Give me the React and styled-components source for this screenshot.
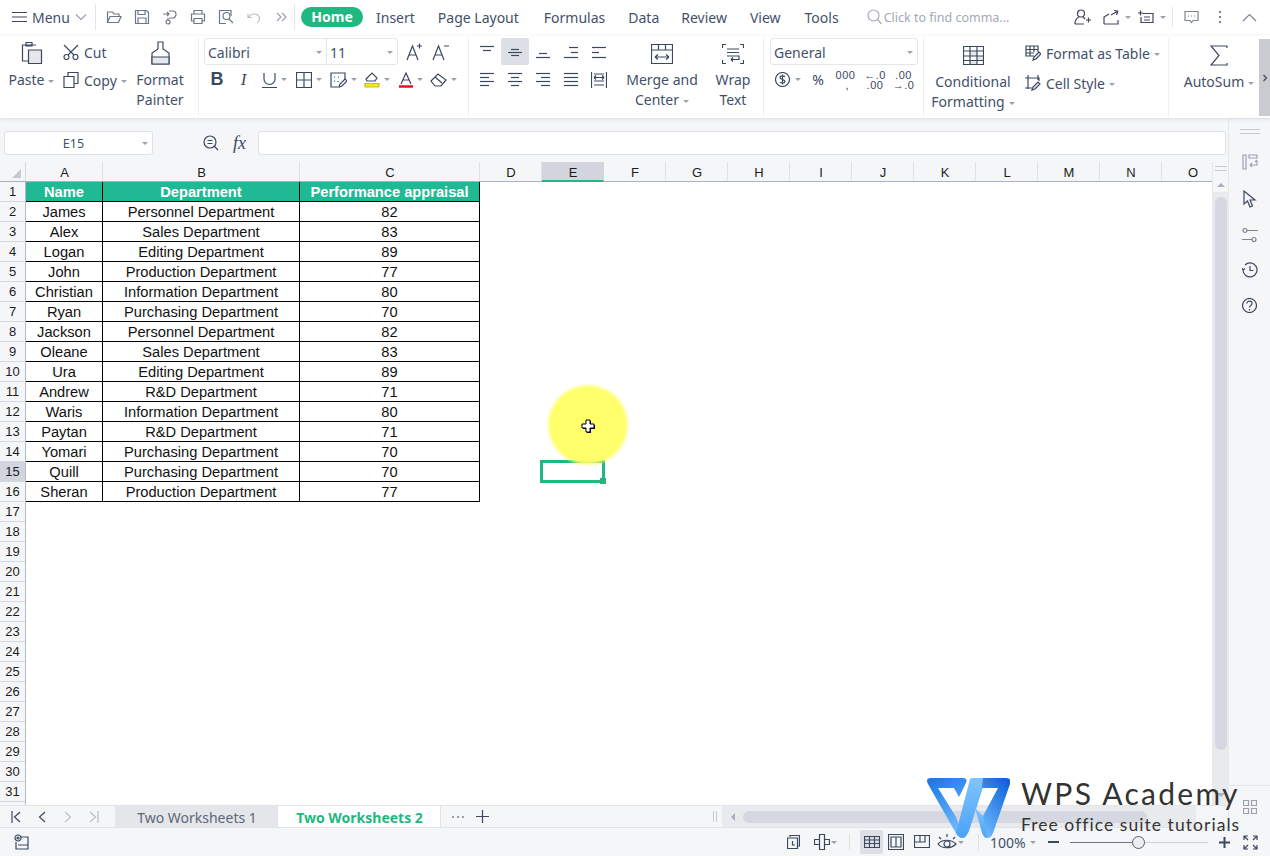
import React from "react";
import styled, { createGlobalStyle } from "styled-components";

const GlobalStyle = createGlobalStyle`
  html, body { margin: 0; padding: 0; background: #f5f6f8; }
  * { box-sizing: border-box; }
`;

const INK = "#3c4860";
const SOFT = "#6d7788";
const GREEN = "#1fb880";

const Page = styled.div`
  position: relative;
  width: 1270px;
  height: 856px;
  overflow: hidden;
  display: flex;
  flex-direction: column;
  background: #f5f6f8;
  color: #44506a;
  font-family: "Noto Sans", "Open Sans", sans-serif;
  font-size: 14px;
`;

const Svg = styled.svg`
  display: block;
  flex: none;
  fill: none;
  stroke: ${(p) => p.$color || INK};
  stroke-width: 1.2;
`;

const Icon = ({ w = 16, h = 16, color, children }) => (
  <Svg width={w} height={h} viewBox={`0 0 ${w} ${h}`} $color={color}>
    {children}
  </Svg>
);

const Caret = styled.span`
  display: inline-block;
  flex: none;
  width: 0;
  height: 0;
  margin-left: ${(p) => p.$gap ?? 4}px;
  vertical-align: middle;
  border-left: 3px solid transparent;
  border-right: 3px solid transparent;
  border-top: 3px solid #9aa1b0;
`;

const Space = styled.span`
  display: block;
  flex: none;
  width: ${(p) => p.$w}px;
`;

/* top bar */
const TopBar = styled.div`
  height: 36px;
  padding-bottom: 2px;
  display: flex;
  align-items: center;
  background: #fff;
  flex: none;
`;
const MenuBtn = styled.div`
  width: 96px;
  height: 26px;
  flex: none;
  padding-left: 12px;
  display: flex;
  align-items: center;
  gap: 5px;
  border-right: 1px solid #e3e5ea;
`;
const QuickTools = styled.div`
  width: 199px;
  height: 26px;
  flex: none;
  padding-left: 10px;
  display: flex;
  align-items: center;
  gap: 12px;
  border-right: 1px solid #e3e5ea;
`;
const Tabs = styled.div`
  display: flex;
  flex: none;
  align-items: center;
  margin-left: 6px;
`;
const Tab = styled.div`
  margin-left: ${(p) => p.$gap}px;
  white-space: nowrap;
`;
const HomeTab = styled.div`
  width: 62px;
  height: 20px;
  border-radius: 10px;
  background: ${GREEN};
  color: #fff;
  font-weight: 700;
  text-align: center;
  line-height: 20px;
`;
const Search = styled.div`
  margin-left: 28px;
  width: 206px;
  flex: none;
  display: flex;
  align-items: center;
  gap: 2px;
  color: #a3a9b6;
  font-size: 12.5px;
`;
const TopRight = styled.div`
  display: flex;
  flex: none;
  align-items: center;
`;
const TopSep = styled.div`
  width: 1px;
  height: 20px;
  background: #e3e5ea;
  margin: 0 11px 0 6px;
`;

/* ribbon */
const Ribbon = styled.div`
  height: 82px;
  display: flex;
  background: #fff;
  flex: none;
  position: relative;
  z-index: 2;
  box-shadow: 0 1px 4px rgba(60, 70, 90, 0.14);
`;
const Group = styled.div`
  width: ${(p) => p.$w}px;
  height: 78px;
  flex: none;
  margin-top: 2px;
  padding-left: ${(p) => p.$pad || 0}px;
  display: flex;
  border-right: ${(p) => (p.$noline ? "none" : "1px solid #eceef1")};
  gap: ${(p) => p.$gap || 0}px;
`;
const Big = styled.div`
  width: ${(p) => p.$w}px;
  flex: none;
  display: flex;
  flex-direction: column;
  align-items: center;
  padding-top: ${(p) => p.$top || 0}px;
  line-height: 20px;
  white-space: nowrap;
`;
const BigIcon = styled.div`
  height: ${(p) => p.$h || 32}px;
  display: flex;
  align-items: flex-start;
  justify-content: center;
  padding-top: ${(p) => p.$pt ?? 4}px;
`;
const Stack = styled.div`
  display: flex;
  flex-direction: column;
  width: ${(p) => p.$w}px;
  flex: none;
  gap: ${(p) => p.$gap || 0}px;
  margin-top: ${(p) => p.$mt || 0}px;
  margin-right: ${(p) => p.$mr || 0}px;
`;
const SmallBtn = styled.div`
  height: 28px;
  display: flex;
  align-items: center;
  gap: 5px;
  white-space: nowrap;
`;
const FontBox = styled.div`
  width: ${(p) => p.$w}px;
  height: 27px;
  display: flex;
  background: #fff;
  border: 1px solid #e4e6ea;
  border-radius: 3px;
`;
const FontCell = styled.div`
  width: ${(p) => p.$w}px;
  padding: 2px 4px 0 ${(p) => p.$pad}px;
  display: flex;
  align-items: center;
  justify-content: space-between;
  border-right: ${(p) => (p.$line ? "1px solid #e4e6ea" : "none")};
`;
const Row = styled.div`
  display: flex;
  align-items: center;
  height: 27px;
  margin-top: ${(p) => p.$mt || 0}px;
`;
const Cell = styled.div`
  width: ${(p) => p.$w}px;
  height: 27px;
  flex: none;
  margin-left: ${(p) => p.$ml || 0}px;
  display: flex;
  align-items: center;
  justify-content: center;
  background: ${(p) => (p.$on ? "#dcdfe5" : "transparent")};
  border-radius: 2px;
`;
const Bold = styled.span`
  font: 700 18px "Liberation Sans", sans-serif;
  color: ${INK};
`;
const Ital = styled.span`
  font: italic 400 ${(p) => p.$size || 17}px "Liberation Serif", serif;
  color: ${INK};
`;
const Percent = styled.span`
  color: ${INK};
  font-size: 14px;
`;
const Mini = styled.span`
  font: 400 11px/10px "Liberation Sans", sans-serif;
  letter-spacing: 0.5px;
  color: ${INK};
  text-align: center;
  white-space: pre;
`;
const RibbonNext = styled.div`
  width: 11px;
  height: 77px;
  flex: none;
  margin-top: 3px;
  background: #c9cbd0;
  display: flex;
  align-items: center;
  justify-content: center;
`;

/* middle */
const Middle = styled.div`
  flex: 1;
  min-height: 0;
  display: flex;
`;
const WorkArea = styled.div`
  width: 1228px;
  flex: none;
  display: flex;
  flex-direction: column;
`;
const FormulaBar = styled.div`
  height: 44px;
  flex: none;
  padding: 13px 2px 0 4px;
  display: flex;
  align-items: flex-start;
`;
const NameBox = styled.div`
  width: 149px;
  height: 24px;
  background: #fff;
  border: 1px solid #e0e2e7;
  border-radius: 3px;
  display: flex;
  align-items: center;
  padding: 0 4px 0 0;
  font-size: 12.5px;
`;
const NameText = styled.span`
  flex: 1;
  text-align: center;
`;
const FxBtns = styled.div`
  width: 105px;
  height: 24px;
  padding-left: 50px;
  display: flex;
  align-items: center;
  gap: 14px;
`;
const FormulaInput = styled.div`
  flex: 1;
  height: 24px;
  background: #fff;
  border: 1px solid #e0e2e7;
  border-radius: 3px;
`;
const SheetRow = styled.div`
  height: 643px;
  flex: none;
  display: flex;
`;
const Sheet = styled.div`
  width: 1212px;
  flex: none;
  display: flex;
  flex-direction: column;
  overflow: hidden;
  font-family: "Liberation Sans", Arial, sans-serif;
`;
const ColHeader = styled.div`
  height: 20px;
  flex: none;
  display: flex;
  border-bottom: 1px solid #aab1c4;
`;
const Corner = styled.div`
  width: 26px;
  flex: none;
  position: relative;
  border-right: 1px solid #d5d8e0;
  &::after {
    content: "";
    position: absolute;
    right: 4px;
    bottom: 3px;
    border-left: 9px solid transparent;
    border-bottom: 9px solid #c6c9d0;
  }
`;
const ColCell = styled.div`
  width: ${(p) => p.$w}px;
  flex: none;
  margin-bottom: ${(p) => (p.$on ? "-1px" : "0")};
  padding-left: 1px;
  background: ${(p) => (p.$on ? "#d2d5dd" : "transparent")};
  border-right: 1px solid ${(p) => (p.$on ? "transparent" : "#dfe1e7")};
  border-bottom: ${(p) => (p.$on ? `2px solid ${GREEN}` : "none")};
  color: #1c1c1c;
  text-align: center;
  font-size: 13px;
  line-height: 21px;
`;
const SheetBody = styled.div`
  position: relative;
  flex: 1;
  display: flex;
  background: #fff;
`;
const RowHeads = styled.div`
  width: 26px;
  flex: none;
  background: #f5f6f8;
  border-right: 1px solid #b4bacb;
`;
const RowHead = styled.div`
  height: 20px;
  line-height: 20px;
  text-align: center;
  font-size: 13px;
  color: #1c1c1c;
  border-bottom: 1px solid #d5d8e0;
  background: ${(p) => (p.$on ? "#d2d5dd" : "transparent")};
`;
const Table = styled.div`
  display: grid;
  grid-template-columns: 77px 197px 180px;
  grid-auto-rows: 20px;
  align-self: flex-start;
`;
const Td = styled.div`
  border-right: 1px solid #000;
  border-bottom: 1px solid #000;
  text-align: center;
  color: #111;
  font-size: 14.67px;
  line-height: 20px;
  white-space: nowrap;
`;
const Th = styled(Td)`
  background: #1fba94;
  color: #fff;
  font-weight: 700;
`;
const Selection = styled.div`
  position: absolute;
  left: 540px;
  top: 278px;
  width: 65px;
  height: 23px;
  border: 3px solid ${GREEN};
  &::after {
    content: "";
    position: absolute;
    right: -4px;
    bottom: -4px;
    width: 6px;
    height: 6px;
    background: ${GREEN};
  }
`;
const VScroll = styled.div`
  width: 16px;
  flex: none;
  display: flex;
  flex-direction: column;
  align-items: center;
  background: linear-gradient(#f5f6f8 0 30px, #e8eaee 30px);
  border-left: 1px solid #e6e8ec;
`;
const GripLines = styled.div`
  width: ${(p) => p.$w}px;
  height: 5px;
  margin-top: ${(p) => p.$mt}px;
  flex: none;
  border-top: 1px solid #c5c9d2;
  border-bottom: 1px solid #c5c9d2;
`;
const ArrowUp = styled.div`
  margin-top: 12px;
  flex: none;
  border-left: 4px solid transparent;
  border-right: 4px solid transparent;
  border-bottom: 4px solid #a9b0c2;
`;
const ArrowDown = styled.div`
  margin-top: 43px;
  flex: none;
  border-left: 4px solid transparent;
  border-right: 4px solid transparent;
  border-top: 4px solid #a9b0c2;
`;
const VThumb = styled.div`
  width: 12px;
  height: 553px;
  margin-top: 10px;
  flex: none;
  border-radius: 6px;
  background: #d5d8e0;
`;

/* sheet tabs */
const TabBar = styled.div`
  height: 23px;
  flex: none;
  display: flex;
  align-items: stretch;
  border-top: 1px solid #e2e4e9;
  border-bottom: 1px solid #e2e4e9;
`;
const NavBtns = styled.div`
  width: 115px;
  flex: none;
  padding-left: 11px;
  display: flex;
  align-items: center;
  gap: 16px;
`;
const SheetTab = styled.div`
  width: ${(p) => p.$w}px;
  flex: none;
  padding-left: 1px;
  text-align: center;
  line-height: 23px;
  white-space: nowrap;
  background: ${(p) => (p.$on ? "#fff" : "#e4e6ea")};
  color: ${(p) => (p.$on ? GREEN : "#5d6678")};
  font-weight: ${(p) => (p.$on ? 700 : 400)};
  border-right: ${(p) => (p.$on ? "1px solid #e2e4e9" : "none")};
`;
const TabAdd = styled.div`
  width: 270px;
  flex: none;
  padding-left: 10px;
  display: flex;
  align-items: center;
  gap: 11px;
`;
const HScroll = styled.div`
  flex: 1;
  display: flex;
  align-items: center;
  min-width: 0;
`;
const HTrack = styled.div`
  margin-left: 5px;
  width: 474px;
  flex: none;
  height: 21px;
  background: #e8eaee;
  display: flex;
  align-items: center;
  padding-left: 9px;
`;
const HThumb = styled.div`
  width: 404px;
  height: 12px;
  margin-left: 8px;
  border-radius: 6px;
  background: #d5d8e0;
`;
const HGrip = styled.div`
  margin-left: 2px;
  width: 4px;
  height: 11px;
  flex: none;
  border-left: 1px solid #c5c9d2;
  border-right: 1px solid #c5c9d2;
`;
const ArrowLeft = styled.div`
  flex: none;
  border-top: 4px solid transparent;
  border-bottom: 4px solid transparent;
  border-right: 4px solid #a9b0c2;
`;

/* side panel */
const SidePanel = styled.div`
  flex: 1;
  display: flex;
  flex-direction: column;
  align-items: center;
  border-left: 1px solid #e6e8ec;
  border-top: 1px solid #eceef1;
`;
const SideIcons = styled.div`
  display: flex;
  flex-direction: column;
  align-items: center;
  gap: 20px;
  margin-top: 20px;
`;
const SideBottom = styled.div`
  margin-top: auto;
  width: 100%;
  height: 43px;
  border-top: 1px solid #e6e8ec;
  display: flex;
  align-items: center;
  justify-content: center;
`;

/* status bar */
const StatusBar = styled.div`
  height: 28px;
  flex: none;
  display: flex;
  align-items: center;
  padding-left: 13px;
`;
const StatusGroup = styled.div`
  margin-left: ${(p) => p.$ml}px;
  display: flex;
  flex: none;
  align-items: center;
`;
const StatusSep = styled.div`
  width: 1px;
  height: 16px;
  flex: none;
  background: #dfe1e6;
  margin: 0 ${(p) => p.$r}px 0 ${(p) => p.$l}px;
`;
const ViewBtn = styled.div`
  width: ${(p) => p.$w}px;
  height: 24px;
  flex: none;
  display: flex;
  align-items: center;
  justify-content: center;
  background: ${(p) => (p.$on ? "#dcdfe5" : "transparent")};
  border-radius: 2px;
`;
const Slider = styled.div`
  position: relative;
  width: 138px;
  height: 1px;
  flex: none;
  margin: 0 11px;
  background: linear-gradient(90deg, #6a7385 0 50%, #cfd2d9 50%);
`;
const Knob = styled.div`
  position: absolute;
  left: 62px;
  top: -6px;
  width: 13px;
  height: 13px;
  border-radius: 50%;
  background: #eceef1;
  border: 1px solid #555e70;
`;

/* overlays */
const Spot = styled.div`
  position: absolute;
  left: 546px;
  top: 383px;
  width: 84px;
  height: 84px;
  border-radius: 50%;
  background: radial-gradient(circle, rgba(255, 255, 102, 0.97) 0 37px, rgba(255, 255, 102, 0.8) 38px, rgba(255, 255, 140, 0) 42px);
  z-index: 3;
`;
const Pointer = styled.svg`
  position: absolute;
  left: 581px;
  top: 419px;
  z-index: 4;
`;
const Watermark = styled.div`
  position: absolute;
  left: 927px;
  top: 778px;
  display: flex;
  gap: 11px;
  z-index: 5;
`;
const MarkText = styled.div`
  display: flex;
  flex-direction: column;
`;
const MarkTitle = styled.div`
  font: 400 30px/30px Lato, sans-serif;
  letter-spacing: 2.3px;
  color: #333;
  white-space: nowrap;
`;
const MarkSub = styled.div`
  margin-top: 5px;
  font: 400 17.5px/24px Lato, sans-serif;
  letter-spacing: 1.05px;
  color: #333;
  white-space: nowrap;
`;

const people = [
  ["James", "Personnel Department", 82],
  ["Alex", "Sales Department", 83],
  ["Logan", "Editing Department", 89],
  ["John", "Production Department", 77],
  ["Christian", "Information Department", 80],
  ["Ryan", "Purchasing Department", 70],
  ["Jackson", "Personnel Department", 82],
  ["Oleane", "Sales Department", 83],
  ["Ura", "Editing Department", 89],
  ["Andrew", "R&D Department", 71],
  ["Waris", "Information Department", 80],
  ["Paytan", "R&D Department", 71],
  ["Yomari", "Purchasing Department", 70],
  ["Quill", "Purchasing Department", 70],
  ["Sheran", "Production Department", 77],
];

const columns = [
  ["A", 77], ["B", 197], ["C", 180], ["D", 62], ["E", 62], ["F", 62], ["G", 62], ["H", 62],
  ["I", 62], ["J", 62], ["K", 62], ["L", 62], ["M", 62], ["N", 62], ["O", 62],
];

const Lines = ({ rows, w = 16 }) => (
  <Icon w={w} h={16}>
    {rows.map(([x1, x2, y]) => (
      <path key={`${x1}${y}`} d={`M${x1} ${y}.5H${x2}`} />
    ))}
  </Icon>
);

function App() {
  return (
    <Page>
      <GlobalStyle />
      <TopBar>
        <MenuBtn>
          <Icon w={15} h={12}><path d="M0 1.500h15M0 6h15M0 10.500h15" /></Icon>
          Menu
          <Icon w={12} h={8} color="#9aa1b0"><path d="M1 1.500l5 5 5-5" /></Icon>
        </MenuBtn>
        <QuickTools>
          <Icon color={SOFT}><path d="M1.500 13.500V3h5l1.500 2h5v2.500M1.500 13.500h11l2.500-6H4z" /></Icon>
          <Icon color={SOFT}><path d="M1.500 1.500h11l2 2v11h-13zM4 1.500v4h7v-4M4 14.500V9h8v5.500" /></Icon>
          <Icon color={SOFT}><path d="M1 5h6M5 3l2 2-2 2M7 2h3.500a3.500 3.500 0 010 7H7M6 9v3" /><circle cx="6" cy="13" r="2" /></Icon>
          <Icon color={SOFT}><path d="M4 5V1.500h8V5M4 12H1.500V5h13v7H12M4 9.500h8v5H4z" /></Icon>
          <Icon color={SOFT}><path d="M13 7V1.500H1.500v13H8" /><circle cx="8.500" cy="7" r="3.500" /><path d="M11 10l4 4" /></Icon>
          <Icon color="#b9bec9"><path d="M2 4.500v4h4M2.500 8.500C5 4 12 3.500 13.500 9a5 5 0 01-2.500 5" /></Icon>
          <Icon color="#9aa1b0"><path d="M3 4l4 4-4 4M8 4l4 4-4 4" /></Icon>
        </QuickTools>
        <Tabs>
          <HomeTab>Home</HomeTab>
          <Tab $gap={13}>Insert</Tab>
          <Tab $gap={23}>Page Layout</Tab>
          <Tab $gap={25}>Formulas</Tab>
          <Tab $gap={23}>Data</Tab>
          <Tab $gap={22}>Review</Tab>
          <Tab $gap={23}>View</Tab>
          <Tab $gap={24}>Tools</Tab>
        </Tabs>
        <Search>
          <Icon w={15} h={16} color="#a3a9b6"><circle cx="6.500" cy="6.500" r="5.500" /><path d="M10.500 10.500l4 4.500" /></Icon>
          Click to find comma...
        </Search>
        <TopRight>
          <Icon w={18} h={16}><circle cx="8" cy="4.500" r="3.500" /><path d="M2 15c0-4 2-6 4-7M10 8l2 2M2 15h9M13 11h5M15.500 8.500v5" /></Icon>
          <Space $w={12} />
          <Icon w={17} h={16}><path d="M1 15V8l5-3M1 15h14v-4M8 6l7-4M15 2l-4-.500M15 2l-1.500 4" /></Icon>
          <Caret $gap={5} />
          <Space $w={7} />
          <Icon w={16} h={16}><path d="M0 4h5M2.500 1.500v5M5 4.500h10v9H3V8M6 8h6M6 11h6" /></Icon>
          <Caret $gap={6} />
          <TopSep />
          <Icon w={15} h={14} color="#7c8596"><path d="M1 1.500h13v9H9l-1.500 2-1.500-2H1zM4 6h1M7 6h1M10 6h1" /></Icon>
          <Space $w={19} />
          <Icon w={4} h={14} color="#7c8596"><path d="M2 1v2M2 6v2M2 11v2" strokeWidth="2" /></Icon>
          <Space $w={20} />
          <Icon w={15} h={9} color="#7c8596"><path d="M1 8l6.500-6.500L14 8" /></Icon>
        </TopRight>
      </TopBar>

      <Ribbon>
        <Group $w={199}>
          <Big $w={63}>
            <BigIcon $h={32} $pt={3}>
              <Icon w={22} h={24}>
                <path d="M15 4H1.500v16H7M5 1.500h6V5H5z" />
                <path d="M7.500 9h13v13.500h-13z" fill="#e5e7ec" />
              </Icon>
            </BigIcon>
            <span>Paste<Caret /></span>
          </Big>
          <Stack $w={72}>
            <SmallBtn>
              <Icon><path d="M1 1l10 10M15 1L5 11" /><circle cx="3.500" cy="13" r="2.500" /><circle cx="12.500" cy="13" r="2.500" /></Icon>
              Cut
            </SmallBtn>
            <SmallBtn>
              <Icon><path d="M5 4V.500h10v11h-4M1 4.500h10v11H1z" /></Icon>
              <span>Copy<Caret /></span>
            </SmallBtn>
          </Stack>
          <Big $w={50}>
            <BigIcon $h={32} $pt={3}>
              <Icon w={19} h={24}>
                <path d="M7 1h5v7l6 4v11H1V12l6-4z" />
                <path d="M1 16h17v7H1z" fill="#e5e7ec" />
              </Icon>
            </BigIcon>
            <span>Format</span>
            <span>Painter</span>
          </Big>
        </Group>

        <Group $w={270} $pad={5}>
          <Stack $w={260}>
            <Row>
              <FontBox $w={194}>
                <FontCell $w={122} $pad={3} $line>Calibri<Caret $gap={0} /></FontCell>
                <FontCell $w={70} $pad={3}>11<Caret $gap={0} /></FontCell>
              </FontBox>
              <Cell $w={27} $ml={2}>
                <Icon w={16} h={18}><path d="M1 17L6.500 3 12 17M3 12h7M11 3h5M13.500.500v5" /></Icon>
              </Cell>
              <Cell $w={27}>
                <Icon w={17} h={18}><path d="M1 17L6.500 3 12 17M3 12h7M12 3h5" /></Icon>
              </Cell>
            </Row>
            <Row $mt={1}>
              <Cell $w={26}><Bold>B</Bold></Cell>
              <Cell $w={27}><Ital>I</Ital></Cell>
              <Cell $w={34}>
                <Icon w={15} h={16}><path d="M2 1v6a5.500 5.500 0 0011 0V1M0 15.500h15" /></Icon>
                <Caret />
              </Cell>
              <Cell $w={35}>
                <Icon><path d="M.500.500h15v15H.500zM8 .500v15M.500 8h15" /></Icon>
                <Caret />
              </Cell>
              <Cell $w={34}>
                <Icon w={17} h={16}>
                  <path d="M8 15H1V1h14v7M4 5h1M8 5h1M4 9h1M8 9v1" />
                  <path d="M9 15l1-3 5-5 2 2-5 5z" />
                </Icon>
                <Caret />
              </Cell>
              <Cell $w={34}>
                <Icon w={16} h={17}>
                  <path d="M2 8l6-6 5 5-2 3H3z" />
                  <path d="M1 12.500h14v3.500H1z" fill="#f5e71f" stroke="#c9bb2a" />
                </Icon>
                <Caret />
              </Cell>
              <Cell $w={33}>
                <Icon w={14} h={16}>
                  <path d="M2 12L7 1l5 11M4 8h6" />
                  <path d="M0 14.500h14" stroke="#e6101d" strokeWidth="2.500" />
                </Icon>
                <Caret />
              </Cell>
              <Cell $w={33}>
                <Icon w={17} h={14}>
                  <path d="M1 8l7-7 8 6-5 6H5z" />
                  <path d="M5 4l7 6" />
                </Icon>
                <Caret />
              </Cell>
            </Row>
          </Stack>
        </Group>

        <Group $w={295} $pad={4} $gap={6}>
          <Stack $w={140} $mr={3}>
            <Row>
              <Cell $w={28}><Lines rows={[[1, 15, 2], [4, 12, 6]]} /></Cell>
              <Cell $w={28} $on><Lines rows={[[4, 12, 5], [1, 15, 8], [4, 12, 11]]} /></Cell>
              <Cell $w={28}><Lines rows={[[4, 12, 9], [1, 15, 13]]} /></Cell>
              <Cell $w={28}><Lines rows={[[6, 15, 3], [8, 15, 8], [1, 15, 13]]} /></Cell>
              <Cell $w={28}><Lines rows={[[1, 15, 3], [1, 8, 8], [1, 15, 13]]} /></Cell>
            </Row>
            <Row $mt={1}>
              <Cell $w={28}><Lines rows={[[1, 15, 1], [1, 10, 5], [1, 15, 9], [1, 10, 13]]} /></Cell>
              <Cell $w={28}><Lines rows={[[1, 15, 1], [4, 12, 5], [1, 15, 9], [4, 12, 13]]} /></Cell>
              <Cell $w={28}><Lines rows={[[1, 15, 1], [6, 15, 5], [1, 15, 9], [6, 15, 13]]} /></Cell>
              <Cell $w={28}><Lines rows={[[1, 15, 1], [1, 15, 5], [1, 15, 9], [1, 15, 13]]} /></Cell>
              <Cell $w={28}>
                <Icon><path d="M.500 0v16M15.500 0v16M3 2h10M3 9h10M3 13h10M3 5.500h10M3 5.500l2-2M3 5.500l2 2M13 5.500l-2-2M13 5.500l-2 2" /></Icon>
              </Cell>
            </Row>
          </Stack>
          <Big $w={80}>
            <BigIcon $pt={6}>
              <Icon w={22} h={20}><path d="M.500.500h21v19H.500zM.500 6h21M7.500 .500V6M14.500 .500V6M4 13h14M4 13l3-2.500M4 13l3 2.500M18 13l-3-2.500M18 13l-3 2.500" /></Icon>
            </BigIcon>
            <span>Merge and</span>
            <span>Center<Caret /></span>
          </Big>
          <Big $w={50}>
            <BigIcon $pt={6}>
              <Icon w={22} h={20}><path d="M4 .500H.500V4M18 .500h3.500V4M4 19.500H.500V16M18 19.500h3.500V16M5 5h12M5 8.500h12M5 12h12v3.500H9M9 15.500l2-2M9 15.500l2 2" /></Icon>
            </BigIcon>
            <span>Wrap</span>
            <span>Text</span>
          </Big>
        </Group>

        <Group $w={160} $pad={6}>
          <Stack $w={148}>
            <FontBox $w={148}>
              <FontCell $w={146} $pad={3}>General<Caret $gap={0} /></FontCell>
            </FontBox>
            <Row $mt={1}>
              <Cell $w={36}>
                <Icon w={15} h={15}><circle cx="7.500" cy="7.500" r="7" /><path d="M10 5c-1-1.500-5-1.500-5 .500 0 2.500 5 1.500 5 4 0 2-4 2-5 .500M7.500 2.500v10" /></Icon>
                <Caret $gap={5} />
              </Cell>
              <Cell $w={24}><Percent>%</Percent></Cell>
              <Cell $w={31}><Mini>{"000\n ,"}</Mini></Cell>
              <Cell $w={28}><Mini>{"←.0\n.00"}</Mini></Cell>
              <Cell $w={29}><Mini>{".00\n→.0"}</Mini></Cell>
            </Row>
          </Stack>
        </Group>

        <Group $w={245} $pad={10} $gap={13}>
          <Big $w={78} $top={2}>
            <BigIcon $pt={6}>
              <Icon w={21} h={20}>
                <path d="M7 5.500h7v4.500H7zM14 10h6.500v4.500H14zM7 14.500h7V19H7z" fill="#e5e7ec" stroke="none" />
                <path d="M.500 .500h20v18h-20zM.500 5h20M.500 10h20M.500 14.500h20M7 .500v18M14 .500v18" />
              </Icon>
            </BigIcon>
            <span>Conditional</span>
            <span>Formatting<Caret /></span>
          </Big>
          <Stack $w={140} $gap={2} $mt={1}>
            <SmallBtn>
              <Icon>
                <path d="M9 11H1V1h12v6M1 4.500h12M1 8h8M5 1v10M9 1v6" />
                <path d="M8 15l1-3 5-5 2 2-5 5z" fill="#e5e7ec" />
              </Icon>
              <span>Format as Table<Caret /></span>
            </SmallBtn>
            <SmallBtn>
              <Icon>
                <path d="M3 0v14M0 3h14v3M0 13h7M13 0v5" />
                <path d="M7 15l1-3 5-5 2 2-5 5z" fill="#e5e7ec" />
              </Icon>
              <span>Cell Style<Caret /></span>
            </SmallBtn>
          </Stack>
        </Group>

        <Group $w={90} $pad={17} $noline>
          <Big $w={66} $top={2}>
            <BigIcon $pt={5}>
              <Icon w={18} h={21}><path d="M17 3V1H1l8 9.500L1 20h16v-2" /></Icon>
            </BigIcon>
            <span>AutoSum<Caret /></span>
          </Big>
        </Group>
        <RibbonNext>
          <Icon w={6} h={8}><path d="M1.500 1l3 3-3 3" /></Icon>
        </RibbonNext>
      </Ribbon>

      <Middle>
        <WorkArea>
          <FormulaBar>
            <NameBox>
              <NameText>E15</NameText>
              <Caret $gap={0} />
            </NameBox>
            <FxBtns>
              <Icon><circle cx="7" cy="7" r="6" /><path d="M4.500 5.500h5M4.500 8.500h5M11 11l4 4" /></Icon>
              <Ital $size={18}>fx</Ital>
            </FxBtns>
            <FormulaInput />
          </FormulaBar>
          <SheetRow>
            <Sheet>
              <ColHeader>
                <Corner />
                {columns.map(([name, w]) => (
                  <ColCell key={name} $w={w} $on={name === "E"}>{name}</ColCell>
                ))}
              </ColHeader>
              <SheetBody>
                <RowHeads>
                  {Array.from({ length: 31 }, (_, i) => (
                    <RowHead key={i} $on={i === 14}>{i + 1}</RowHead>
                  ))}
                </RowHeads>
                <Table>
                  <Th>Name</Th>
                  <Th>Department</Th>
                  <Th>Performance appraisal</Th>
                  {people.map(([name, dept, score], i) => (
                    <React.Fragment key={i}>
                      <Td>{name}</Td>
                      <Td>{dept}</Td>
                      <Td>{score}</Td>
                    </React.Fragment>
                  ))}
                </Table>
                <Selection />
              </SheetBody>
            </Sheet>
            <VScroll>
              <GripLines $w={12} $mt={4} />
              <ArrowUp />
              <VThumb />
              <ArrowDown />
            </VScroll>
          </SheetRow>
          <TabBar>
            <NavBtns>
              <Icon w={10} h={12}><path d="M1 0v12M9 1L3.500 6 9 11" /></Icon>
              <Icon w={10} h={12}><path d="M8 1L2.500 6 8 11" /></Icon>
              <Icon w={10} h={12} color="#b9bec9"><path d="M2 1l5.500 5L2 11" /></Icon>
              <Icon w={10} h={12} color="#b9bec9"><path d="M9 0v12M1 1l5.500 5L1 11" /></Icon>
            </NavBtns>
            <SheetTab $w={163}>Two Worksheets 1</SheetTab>
            <SheetTab $w={163} $on>Two Worksheets 2</SheetTab>
            <TabAdd>
              <Icon w={14} h={4}><path d="M1 2h2M6 2h2M11 2h2" /></Icon>
              <Icon w={13} h={13}><path d="M0 6.500h13M6.500 0v13" /></Icon>
            </TabAdd>
            <HScroll>
              <HGrip />
              <HTrack>
                <ArrowLeft />
                <HThumb />
              </HTrack>
            </HScroll>
          </TabBar>
        </WorkArea>
        <SidePanel>
          <GripLines $w={20} $mt={10} />
          <SideIcons>
            <Icon w={16} h={16} color="#9aa1b0"><path d="M1 1h3v14H1zM7 1h8v3H7zM15 7v4H8M8 11l2-2M8 11l2 2M13 8l2-2" /></Icon>
            <Icon w={14} h={18}><path d="M1 1v13l3.500-3 2.500 6 2.500-1-2.500-6h5z" /></Icon>
            <Icon w={16} h={14} color="#7c8596"><circle cx="3" cy="2.500" r="2" /><circle cx="12" cy="11.500" r="2" /><path d="M5 2.500h11M0 11.500h10" /></Icon>
            <Icon w={16} h={16}><path d="M1 8a7 7 0 102-5M1 8l-1-2M1 8l2-1.500M8 4v4.500h3.500" /></Icon>
            <Icon w={15} h={15}><circle cx="7.500" cy="7.500" r="7" /><path d="M5 5.500c0-3.500 5.500-3 5 0 0 2-2.500 2-2.500 4M7.500 11v1.500" /></Icon>
          </SideIcons>
          <SideBottom>
            <Icon w={14} h={14} color="#9aa1b0"><path d="M.500.500h5v5h-5zM8.500.500h5v5h-5zM.500 8.500h5v5h-5zM8.500 8.500h5v5h-5z" /></Icon>
          </SideBottom>
        </SidePanel>
      </Middle>

      <StatusBar>
        <Icon w={16} h={16}><circle cx="5" cy="4" r="3" /><circle cx="5" cy="4" r="1" /><path d="M8 3h7v8M3 8v7h12v-4H5" /></Icon>
        <StatusGroup $ml={758}>
          <Icon w={13} h={14}><path d="M3 2V.500h9.500V11H11M.500 3h10v10.500H.500zM5.500 6v4H8" /></Icon>
          <Space $w={14} />
          <Icon w={16} h={16}><path d="M5.500.500h5v5h5v5h-5v5h-5v-5h-5v-5h5zM5.500 5.500v5M10.500 5.500v5" /></Icon>
          <Caret $gap={1} />
          <StatusSep $l={12} $r={10} />
          <ViewBtn $w={23} $on>
            <Icon><path d="M.500 2.500h15v11H.500zM.500 6h15M.500 9.500h15M5.500 2.500v11M10.500 2.500v11" /></Icon>
          </ViewBtn>
          <ViewBtn $w={26}>
            <Icon><path d="M.500 .500h15v15H.500zM3 3h10v10H3zM8 3v10" /></Icon>
          </ViewBtn>
          <ViewBtn $w={26}>
            <Icon><path d="M.500 1.500h15v12H.500zM6 1.500V8h5V1.500M.500 8h5" /></Icon>
          </ViewBtn>
          <ViewBtn $w={23}>
            <Icon w={20} h={16}><path d="M1 10c4-5 13-5 18 0-5 5-14 5-18 0zM4 5L2 3M10 3V0M16 5l2-2" /><circle cx="10" cy="10" r="3" /></Icon>
          </ViewBtn>
          <Caret $gap={0} />
          <StatusSep $l={14} $r={11} />
          <span>100%</span>
          <Caret $gap={4} />
          <Space $w={12} />
          <Icon w={11} h={2}><path d="M0 1h11" strokeWidth="2" /></Icon>
          <Slider><Knob /></Slider>
          <Icon w={11} h={11}><path d="M0 5.500h11M5.500 0v11" strokeWidth="2" /></Icon>
          <Space $w={13} />
          <Icon w={15} h={15}><path d="M1 5V1h4M1 1l4 4M14 5V1h-4M14 1l-4 4M1 10v4h4M1 14l4-4M14 10v4h-4M14 14l-4-4" /></Icon>
        </StatusGroup>
      </StatusBar>

      <Spot />
      <Pointer width="15" height="15" viewBox="0 0 15 15">
        <path d="M6 2h4v4h4v4h-4v4H6v-4H2V6h4z" fill="#000" />
        <path d="M5 1h4v4h4v4H9v4H5V9H1V5h4z" fill="#fff" stroke="#000" />
      </Pointer>

      <Watermark>
        <svg width="83" height="60" viewBox="7 5 83 60">
          <defs>
            <linearGradient id="wl" x1="0" y1="0" x2="0.4" y2="1">
              <stop offset="0" stopColor="#1873e6" />
              <stop offset="1" stopColor="#6db9fc" />
            </linearGradient>
            <linearGradient id="wm" x1="0" y1="0" x2="0" y2="1">
              <stop offset="0" stopColor="#7fc4ff" />
              <stop offset="1" stopColor="#4aa3f5" />
            </linearGradient>
            <linearGradient id="wr" x1="0.8" y1="0" x2="0.2" y2="1">
              <stop offset="0" stopColor="#0f62d8" />
              <stop offset="1" stopColor="#6db9fc" />
            </linearGradient>
          </defs>
          <path d="M11 5H43Q48 5 46 10L39 24 34 15H18L36 44 44 65Q40 66 37 62L8 11Q5 5 11 5Z" fill="url(#wl)" />
          <path d="M44 65Q39 65 36 60L50 6Q51 5 53 5H66L50 55Q48 62 44 65Z" fill="url(#wm)" />
          <path d="M55 35L63 43 72 62Q70 65 67 65 64 65 62 60Z" fill="url(#wm)" />
          <path d="M63 5H86Q92 5 90 11L73 60Q71 65 67 65L63 43 78 15H62Z" fill="url(#wr)" />
        </svg>
        <MarkText>
          <MarkTitle>WPS Academy</MarkTitle>
          <MarkSub>Free office suite tutorials</MarkSub>
        </MarkText>
      </Watermark>
    </Page>
  );
}

export default App;
